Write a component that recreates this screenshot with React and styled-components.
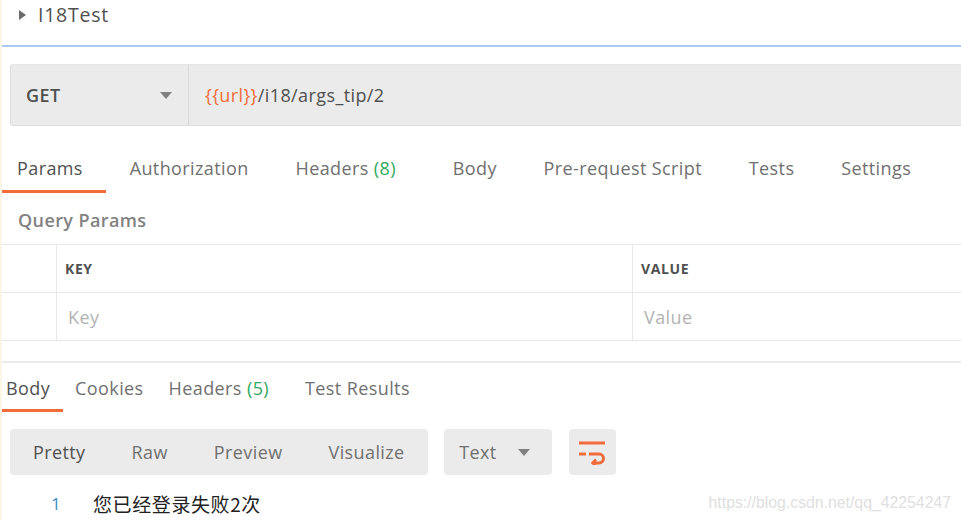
import React from "react";
import styled, { createGlobalStyle } from "styled-components";

const Global = createGlobalStyle`
  html, body { margin: 0; padding: 0; background: #fff; }
  body { font-family: "Open Sans", "Noto Sans", sans-serif; overflow: hidden; }
`;

const Page = styled.div`
  position: relative;
  display: flex;
  width: 961px;
  height: 520px;
  overflow: hidden;
  background: #fff;
`;

const LeftStrip = styled.div`
  width: 2px;
  flex: none;
  background: #fcf6e4;
`;

const Main = styled.div`
  flex: 1;
  min-width: 0;
  display: flex;
  flex-direction: column;
  font-size: 18px;
  letter-spacing: 0.4px;
`;

const TitleRow = styled.div`
  height: 45px;
  box-sizing: border-box;
  padding: 3px 0 0 17px;
  display: flex;
  align-items: flex-start;
  gap: 12px;
`;

const Caret = styled.span`
  width: 0;
  height: 0;
  margin-top: 7px;
  border-top: 5px solid transparent;
  border-bottom: 5px solid transparent;
  border-left: 7px solid #6b6b6b;
`;

const Title = styled.span`
  font-size: 19.5px;
  letter-spacing: 0.75px;
  line-height: 24px;
  color: #505050;
`;

const BlueRule = styled.div`
  height: 2px;
  background: #a9cbf2;
`;

const UrlBar = styled.div`
  margin: 17px -6px 0 8px;
  height: 62px;
  box-sizing: border-box;
  display: flex;
  background: #ebebeb;
  border: 1px solid #dcdcdc;
  border-top-color: #e6e6e6;
  border-radius: 3px;
`;

const Method = styled.div`
  width: 178px;
  flex: none;
  box-sizing: border-box;
  padding: 0 16px 0 15px;
  display: flex;
  align-items: center;
  justify-content: space-between;
  border-right: 1px solid #dadada;
  font-weight: 600;
  color: #505050;
`;

const DownCaret = styled.span`
  width: 0;
  height: 0;
  border-left: 6px solid transparent;
  border-right: 6px solid transparent;
  border-top: 7px solid #808080;
`;

const UrlText = styled.div`
  padding-left: 16px;
  display: flex;
  align-items: center;
  color: #505050;
`;

const Var = styled.span`
  color: #f26b3a;
`;

const Tabs = styled.div`
  display: flex;
  margin-top: ${(p) => p.$mt}px;
`;

const Tab = styled.div`
  padding: ${(p) => p.$pt}px ${(p) => p.$px}px ${(p) => p.$pb}px;
  line-height: 22px;
  color: ${(p) => (p.$active ? "#505050" : "#707070")};
  border-bottom: 3px solid ${(p) => (p.$active ? "#f26b3a" : "transparent")};
  white-space: nowrap;
  &:first-child {
    padding-left: ${(p) => p.$first}px;
  }
`;

const Count = styled.span`
  color: #2fa95e;
  margin-right: ${(p) => p.$trail}px;
`;

const SectionLabel = styled.div`
  padding: 15px 0 0 16px;
  line-height: 24px;
  font-weight: 600;
  color: #828282;
`;

const Table = styled.div`
  margin-top: 12px;
  display: grid;
  grid-template-columns: 54px 576px 1fr;
  border-top: 1px solid #e8e8e8;
`;

const Cell = styled.div`
  height: 48px;
  box-sizing: border-box;
  border-bottom: 1px solid #e8e8e8;
  border-left: ${(p) => (p.$noLeft ? "none" : "1px solid #e8e8e8")};
  display: flex;
  align-items: center;
  padding-left: ${(p) => (p.$head ? 8 : 11)}px;
  font-size: ${(p) => (p.$head ? 14 : 18)}px;
  letter-spacing: ${(p) => (p.$head ? 0.6 : 0.4)}px;
  font-weight: ${(p) => (p.$head ? 700 : 400)};
  color: ${(p) => (p.$head ? "#505050" : "#b3b3b3")};
`;

const GreyRule = styled.div`
  margin-top: 20px;
  height: 2px;
  background: #ececec;
`;

const Toolbar = styled.div`
  display: flex;
  margin: 17px 0 0 8px;
  gap: 16.5px;
`;

const Segmented = styled.div`
  display: flex;
  height: 46px;
  background: #ebebeb;
  border-radius: 4px;
`;

const SegButton = styled.div`
  padding: 0 23px;
  display: flex;
  align-items: center;
  color: ${(p) => (p.$active ? "#505050" : "#707070")};
`;

const Select = styled.div`
  width: 108px;
  height: 46px;
  box-sizing: border-box;
  padding: 0 22px 0 15px;
  display: flex;
  align-items: center;
  justify-content: space-between;
  background: #ebebeb;
  border-radius: 4px;
  color: #707070;
`;

const IconButton = styled.div`
  width: 47px;
  height: 46px;
  display: flex;
  align-items: center;
  justify-content: center;
  background: #ebebeb;
  border-radius: 4px;
`;

const CodeLine = styled.div`
  margin-top: 18px;
  display: flex;
  align-items: center;
  line-height: 22px;
  letter-spacing: 0;
`;

const LineNo = styled.span`
  width: 91px;
  box-sizing: border-box;
  padding-left: 49px;
  font-family: "Open Sans", sans-serif;
  font-size: 17px;
  color: #3a8ec8;
`;

const CodeText = styled.span`
  font-family: "Noto Sans CJK SC", "Microsoft YaHei", sans-serif;
  font-size: 19px;
  letter-spacing: 0.6px;
  color: #222;
`;

const Watermark = styled.div`
  position: absolute;
  right: 10px;
  bottom: 8px;
  font-family: "Liberation Sans", Arial, sans-serif;
  font-size: 15.8px;
  color: #e0e0e0;
`;

const WrapIcon = () => (
  <svg width="28" height="26" viewBox="0 0 28 26" fill="none" stroke="#f26b3a" strokeWidth="3">
    <path d="M1 4 H27" />
    <path d="M1 15 H8" />
    <path d="M11 15 H21 a4.5 4.5 0 0 1 0 9 H15" />
    <path d="M18 20.5 L14.5 24 L18 27" strokeWidth="2.5" />
  </svg>
);

export default function App() {
  const reqTabs = [
    ["Params"],
    ["Authorization"],
    ["Headers", "8"],
    ["Body"],
    ["Pre-request Script"],
    ["Tests"],
    ["Settings"],
  ];
  const resTabs = [["Body"], ["Cookies"], ["Headers", "5"], ["Test Results"]];
  return (
    <>
      <Global />
      <Page>
        <LeftStrip />
        <Main>
          <TitleRow>
            <Caret />
            <Title>I18Test</Title>
          </TitleRow>
          <BlueRule />
          <UrlBar>
            <Method>
              GET
              <DownCaret />
            </Method>
            <UrlText>
              <Var>{"{{url}}"}</Var>/i18/args_tip/2
            </UrlText>
          </UrlBar>
          <Tabs $mt={20}>
            {reqTabs.map(([t, c], i) => (
              <Tab key={t} $active={i === 0} $pt={11} $pb={11} $px={23.4} $first={15}>
                {t}
                {c && (
                  <>
                    {" "}
                    <Count $trail={10}>({c})</Count>
                  </>
                )}
              </Tab>
            ))}
          </Tabs>
          <SectionLabel>Query Params</SectionLabel>
          <Table>
            <Cell $noLeft />
            <Cell $head>KEY</Cell>
            <Cell $head>VALUE</Cell>
            <Cell $noLeft />
            <Cell>Key</Cell>
            <Cell>Value</Cell>
          </Table>
          <GreyRule />
          <Tabs $mt={0}>
            {resTabs.map(([t, c], i) => (
              <Tab key={t} $active={i === 0} $pt={14} $pb={10} $px={12.5} $first={4}>
                {t}
                {c && (
                  <>
                    {" "}
                    <Count $trail={11}>({c})</Count>
                  </>
                )}
              </Tab>
            ))}
          </Tabs>
          <Toolbar>
            <Segmented>
              <SegButton $active>Pretty</SegButton>
              <SegButton>Raw</SegButton>
              <SegButton>Preview</SegButton>
              <SegButton>Visualize</SegButton>
            </Segmented>
            <Select>
              Text
              <DownCaret />
            </Select>
            <IconButton>
              <WrapIcon />
            </IconButton>
          </Toolbar>
          <CodeLine>
            <LineNo>1</LineNo>
            <CodeText>您已经登录失败2次</CodeText>
          </CodeLine>
        </Main>
        <Watermark>https://blog.csdn.net/qq_42254247</Watermark>
      </Page>
    </>
  );
}
